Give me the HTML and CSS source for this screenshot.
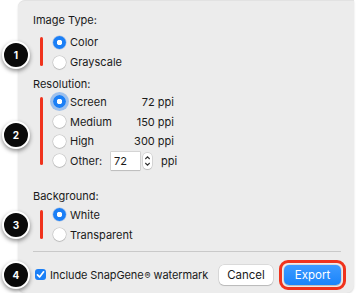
FILE: index.html
```html
<!DOCTYPE html>
<html lang="en">
<head>
  <meta charset="UTF-8">
  <meta name="viewport" content="width=device-width, initial-scale=1.0">
  <title>Export Image</title>
  <link rel="stylesheet" href="styles.css">
</head>
<body>
  <div class="panel">
    <div class="section-label">Image Type:</div>
    <div class="group">
      <span class="badge">1</span>
      <span class="mark"></span>
      <div class="options">
        <div class="row"><span class="radio on"></span>Color</div>
        <div class="row"><span class="radio"></span>Grayscale</div>
      </div>
    </div>

    <div class="section-label tight">Resolution:</div>
    <div class="group res">
      <span class="badge">2</span>
      <span class="mark"></span>
      <div class="options">
        <div class="row"><span class="radio on focus"></span><span class="name">Screen</span><span class="ppi">72 ppi</span></div>
        <div class="row"><span class="radio"></span><span class="name">Medium</span><span class="ppi">150 ppi</span></div>
        <div class="row"><span class="radio"></span><span class="name">High</span><span class="ppi">300 ppi</span></div>
        <div class="row">
          <span class="radio"></span><span class="name other">Other:</span>
          <input class="num" type="text" value="72">
          <span class="stepper">
            <svg width="9" height="16" viewBox="0 0 9 16"><path d="M2.3 6 L4.5 3.8 L6.7 6" fill="none" stroke="#333" stroke-width="1.1"/><path d="M2.3 10 L4.5 12.2 L6.7 10" fill="none" stroke="#333" stroke-width="1.1"/></svg>
          </span>
          <span class="unit">ppi</span>
        </div>
      </div>
    </div>

    <div class="section-label close">Background:</div>
    <div class="group bg">
      <span class="badge">3</span>
      <span class="mark"></span>
      <div class="options">
        <div class="row"><span class="radio on"></span>White</div>
        <div class="row"><span class="radio"></span>Transparent</div>
      </div>
    </div>

    <hr class="sep">

    <div class="footer">
      <span class="badge">4</span>
      <label class="check"><span class="box">
        <svg width="9" height="9" viewBox="0 0 9 9"><path d="M1.5 4.8 L3.6 7 L7.6 1.8" fill="none" stroke="#fff" stroke-width="1.7" stroke-linecap="round" stroke-linejoin="round"/></svg>
      </span><span>Include SnapGene<span class="reg">®</span> watermark</span></label>
      <button class="btn">Cancel</button>
      <span class="highlight"><button class="btn primary">Export</button></span>
    </div>
  </div>
</body>
</html>
```

FILE: styles.css
```css
body {
  margin: 0;
  background: #fff;
  font-family: Inter, "Liberation Sans", sans-serif;
  font-size: 11px;
  color: #1a1a1a;
}
.panel {
  margin-left: 18px;
  width: 336px;
  height: 293px;
  box-sizing: border-box;
  padding: 11px 13px 0 15px;
  background: #ececec;
  border-top: 1px solid #e2e2e2;
  border-radius: 7px 0 8px 8px;
  box-shadow: 0 1px 2px rgba(0,0,0,0.15);
}
.section-label {
  line-height: 16px;
  margin-bottom: 4px;
}
.section-label.tight {
  margin-bottom: 0;
}
.section-label.close {
  margin-bottom: 1px;
}
.group {
  position: relative;
  display: flex;
  padding-left: 7px;
  margin-bottom: 4px;
}
.group.res {
  margin-bottom: 17px;
}
.mark {
  width: 3px;
  margin: 5px 10px 6px 0;
  background: #f0331d;
  border-radius: 2px;
}
.options {
  flex: 1;
}
.row {
  display: flex;
  align-items: center;
  height: 20px;
}
.res .row {
  height: 19.7px;
}
.radio {
  width: 13px;
  height: 13px;
  box-sizing: border-box;
  border-radius: 50%;
  background: #fff;
  box-shadow: 0 0 0 0.5px rgba(0,0,0,0.18), 0 1px 1px rgba(0,0,0,0.12);
  margin-right: 4px;
}
.radio.on {
  background: radial-gradient(circle, #fff 0 2.5px, #1b7ff6 3px);
  box-shadow: 0 0 0 0.5px rgba(0,80,200,0.3);
}
.radio.focus {
  box-shadow: 0 0 0 3px rgba(92,156,236,0.55);
}
.name {
  width: 60px;
}
.name.other {
  width: 41px;
}
.ppi {
  width: 44px;
  text-align: right;
}
.num {
  width: 29px;
  height: 18px;
  box-sizing: border-box;
  border: none;
  background: #fff;
  box-shadow: 0 0 0 0.5px rgba(0,0,0,0.2), 0 1px 1px rgba(0,0,0,0.1);
  font: inherit;
  padding: 0 3px;
  color: #1a1a1a;
}
.stepper {
  display: flex;
  width: 9px;
  height: 16px;
  margin-left: 3px;
  background: #fff;
  border-radius: 4px;
  box-shadow: 0 0 0 0.5px rgba(0,0,0,0.2), 0 1px 1px rgba(0,0,0,0.1);
}
.unit {
  margin-left: 9px;
}
.badge {
  position: absolute;
  left: -31px;
  top: 50%;
  margin-top: -11px;
  width: 24px;
  height: 24px;
  border-radius: 50%;
  background: #0a0a0a;
  border: 2px solid #fff;
  box-shadow: 0 2px 4px rgba(0,0,0,0.45);
  color: #fff;
  font-size: 10px;
  font-weight: 700;
  display: flex;
  align-items: center;
  justify-content: center;
}
.res .badge {
  margin-top: -10px;
}
.bg .badge {
  margin-top: -14px;
}
.sep {
  border: none;
  border-top: 1px solid #c9c9c9;
  margin: 6px 0 0 0;
}
.footer {
  position: relative;
  display: flex;
  align-items: center;
  height: 46px;
  padding-left: 2px;
}
.footer .badge {
  left: -31px;
  margin-top: -14px;
}
.check {
  display: flex;
  align-items: center;
  flex: 1;
  letter-spacing: -0.1px;
}
.reg {
  font-size: 9px;
  margin-left: 1px;
}
.box {
  width: 11px;
  height: 11px;
  border-radius: 3px;
  background: #1b7ff6;
  display: flex;
  align-items: center;
  justify-content: center;
  margin-right: 4px;
}
.btn {
  font: inherit;
  font-size: 11.5px;
  height: 20px;
  width: 54px;
  border: none;
  border-radius: 5px;
  background: #fff;
  color: #1a1a1a;
  box-shadow: 0 0 0 0.5px rgba(0,0,0,0.15), 0 1px 1px rgba(0,0,0,0.15);
  padding: 0;
}
.highlight {
  margin-left: 6px;
  margin-right: -5px;
  padding: 2px;
  border: 3px solid #f0331d;
  border-radius: 9px;
  display: flex;
}
.btn.primary {
  width: 57px;
  color: #fff;
  background: linear-gradient(#3e9bff, #1a84fb);
}
```
